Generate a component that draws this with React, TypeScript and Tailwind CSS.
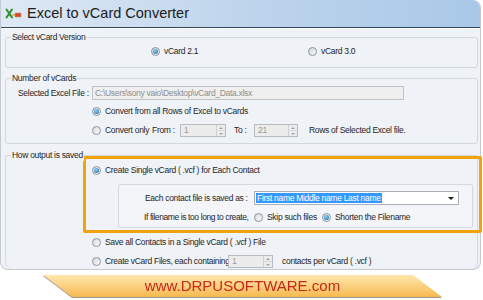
import React from "react";

const Radio = ({ checked }: { checked?: boolean }) => (
  <span className="flex h-[9px] w-[9px] shrink-0 items-center justify-center rounded-full border border-[#8b939b] bg-linear-to-br from-[#d4d9de] to-[#fbfbfb]">
    {checked && (
      <span className="h-[5px] w-[5px] rounded-full bg-[radial-gradient(circle_at_40%_35%,#8fd6f7,#1b5c99)]" />
    )}
  </span>
);

const Option = ({
  label,
  checked,
  className = "",
}: {
  label: string;
  checked?: boolean;
  className?: string;
}) => (
  <div className={`flex h-[12px] items-center gap-[4px] ${className}`}>
    <Radio checked={checked} />
    <span className="whitespace-nowrap">{label}</span>
  </div>
);

const Spin = ({ value, width }: { value: string; width: string }) => (
  <div className={`flex h-[13px] shrink-0 border border-[#b7bcc2] bg-[#ececec] ${width}`}>
    <span className="flex-1 pl-[3px] leading-[11px] text-[#9a9a9a]">{value}</span>
    <div className="flex w-[9px] flex-col border-l border-[#cdd1d6]">
      <div className="flex flex-1 items-center justify-center border-b border-[#d6d9dc]">
        <span className="h-0 w-0 border-x-[2px] border-b-[2px] border-x-transparent border-b-[#a3a3a3]" />
      </div>
      <div className="flex flex-1 items-center justify-center">
        <span className="h-0 w-0 border-x-[2px] border-t-[2px] border-x-transparent border-t-[#a3a3a3]" />
      </div>
    </div>
  </div>
);

const Group = ({
  label,
  className,
  children,
}: {
  label: string;
  className: string;
  children: React.ReactNode;
}) => (
  <div className={`relative ml-[4px] mr-[2px] rounded-[3px] border border-[#d2d8df] ${className}`}>
    <span className="absolute -top-[7px] left-[5px] bg-[#eff2f7] px-[1px] leading-[12px]">
      {label}
    </span>
    {children}
  </div>
);

const ExcelIcon = () => (
  <svg width="17" height="11" viewBox="0 0 17 11">
    <path d="M1.5 1.5 L7 9.5 M7 1.5 L1.5 9.5" stroke="#2f8f2f" strokeWidth="2" strokeLinecap="round" />
    <path d="M7 7 H10" stroke="#e0a020" strokeWidth="1.2" />
    <rect x="10" y="5" width="6" height="4" fill="#d9442b" stroke="#b8a070" strokeWidth="0.6" />
  </svg>
);

export default function App() {
  return (
    <div className="h-[300px] w-[483px] bg-white font-['Liberation_Sans',sans-serif] text-[8.5px] tracking-[-0.3px] text-[#1f1f1f]">
      <div className="flex h-[270px] w-[481px] flex-col rounded-tr-[8px] rounded-b-[8px] border-x border-b border-[#c3cad2] bg-[#eff2f7]">
        <div className="flex h-[28px] items-center gap-[5px] rounded-tr-[8px] border-b border-[#33475c] bg-linear-to-r from-[#dfe9f5] via-[#bfd5ec] to-[#a9c8e8] pl-[4px] text-[14.5px] tracking-normal text-[#1b1b1b]">
          <ExcelIcon />
          <span>Excel to vCard Converter</span>
        </div>
        <div className="h-px bg-white" />

        <Group label="Select vCard Version" className="mt-[8px] h-[31px] pt-[7px]">
          <div className="ml-[145px] flex">
            <Option label="vCard 2.1" checked className="w-[157px]" />
            <Option label="vCard 3.0" />
          </div>
        </Group>

        <Group label="Number of vCards" className="mt-[10px] h-[66px] pt-[7px]">
          <div className="ml-[12px] flex h-[14px] items-center">
            <span className="w-[74px] whitespace-nowrap">Selected Excel File :</span>
            <div className="flex h-[14px] w-[312px] items-center border border-[#bfc3c8] bg-[#efefef] pl-[2px] text-[#8e8e8e]">
              C:\Users\sony vaio\Desktop\vCard_Data.xlsx
            </div>
          </div>
          <Option label="Convert from all Rows of Excel to vCards" checked className="ml-[86px] mt-[5px]" />
          <div className="ml-[86px] mt-[7px] flex h-[13px] items-center">
            <Radio />
            <span className="ml-[4px] w-[47px] whitespace-nowrap">Convert only</span>
            <span className="w-[28px]">From :</span>
            <Spin value="1" width="w-[46px]" />
            <span className="ml-[8px] w-[20px]">To :</span>
            <Spin value="21" width="w-[44px]" />
            <span className="ml-[11px] whitespace-nowrap">Rows of Selected Excel file.</span>
          </div>
        </Group>

        <Group label="How output is saved" className="mt-[11px] flex-1 rounded-b-[7px] border-b-0">
          <div className="ml-[77px] h-[77px] w-[399px] rounded-[2px] border-[3px] border-[#f1a30d] pt-[5px]">
            <Option label="Create Single vCard ( .vcf ) for Each Contact" checked className="ml-[6px]" />
            <div className="ml-[32px] mt-[8px] h-[44px] w-[355px] rounded-[2px] border border-[#d3d8de] bg-[#f3f5f9] pt-[6px]">
              <div className="flex h-[14px] items-center">
                <span className="ml-[26px] w-[109px] whitespace-nowrap">Each contact file is saved as :</span>
                <div className="flex h-[14px] w-[205px] items-center justify-between border border-[#a9b0b8] bg-white pl-[1px] pr-[4px]">
                  <span className="bg-[#3399ff] px-[1px] leading-[10px] text-white">
                    First name Middle name Last name
                  </span>
                  <span className="h-0 w-0 border-x-[3px] border-t-[3px] border-x-transparent border-t-[#1a1a1a]" />
                </div>
              </div>
              <div className="mt-[6px] flex h-[12px] items-center">
                <span className="ml-[25px] w-[110px] whitespace-nowrap tracking-[-0.4px]">If filename is too long to create,</span>
                <Option label="Skip such files" className="w-[68px]" />
                <Option label="Shorten the Filename" checked />
              </div>
            </div>
          </div>
          <Option label="Save all Contacts in a Single vCard ( .vcf ) File" className="ml-[86px] mt-[3px]" />
          <div className="ml-[86px] mt-[7px] flex h-[13px] items-center">
            <Radio />
            <span className="ml-[4px] w-[123px] whitespace-nowrap">Create vCard Files, each containing</span>
            <Spin value="1" width="w-[45px]" />
            <span className="ml-[9px] whitespace-nowrap">contacts per vCard ( .vcf )</span>
          </div>
        </Group>
      </div>

      <div className="ml-[43px] mt-[5px] w-[399px] [filter:drop-shadow(0_1px_0_#9a9a9a)]">
        <div className="flex h-[22px] items-center justify-center bg-linear-to-b from-[#fee7ad] to-[#f7b94c] pt-[1px] text-[15px] tracking-normal text-[#c42a1c] [clip-path:polygon(0_0,370px_0,100%_100%,29px_100%)]">
          www.DRPUSOFTWARE.com
        </div>
      </div>
    </div>
  );
}
